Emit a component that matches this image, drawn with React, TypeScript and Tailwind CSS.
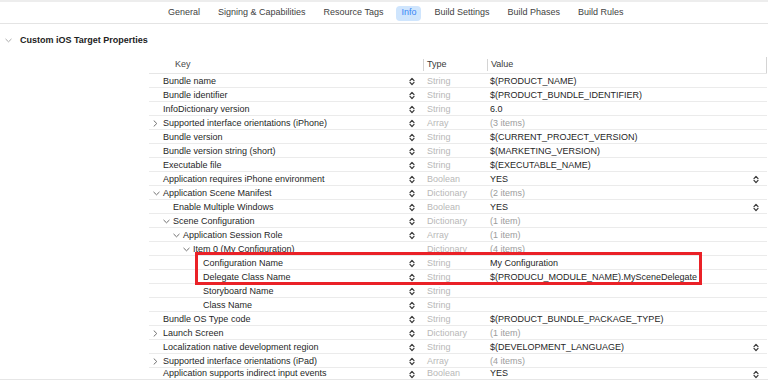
import React from "react";

type Row = {
  k: string;
  l?: number;
  chev?: "right" | "down";
  t: string;
  v: string;
  muted?: boolean;
  rs?: boolean;
  noStep?: boolean;
};

const rows: Row[] = [
  { k: "Bundle name", t: "String", v: "$(PRODUCT_NAME)" },
  { k: "Bundle identifier", t: "String", v: "$(PRODUCT_BUNDLE_IDENTIFIER)" },
  { k: "InfoDictionary version", t: "String", v: "6.0" },
  { k: "Supported interface orientations (iPhone)", chev: "right", t: "Array", v: "(3 items)", muted: true },
  { k: "Bundle version", t: "String", v: "$(CURRENT_PROJECT_VERSION)" },
  { k: "Bundle version string (short)", t: "String", v: "$(MARKETING_VERSION)" },
  { k: "Executable file", t: "String", v: "$(EXECUTABLE_NAME)" },
  { k: "Application requires iPhone environment", t: "Boolean", v: "YES", rs: true },
  { k: "Application Scene Manifest", chev: "down", t: "Dictionary", v: "(2 items)", muted: true },
  { k: "Enable Multiple Windows", l: 1, t: "Boolean", v: "YES", rs: true },
  { k: "Scene Configuration", l: 1, chev: "down", t: "Dictionary", v: "(1 item)", muted: true },
  { k: "Application Session Role", l: 2, chev: "down", t: "Array", v: "(1 item)", muted: true },
  { k: "Item 0 (My Configuration)", l: 3, chev: "down", t: "Dictionary", v: "(4 items)", muted: true, noStep: true },
  { k: "Configuration Name", l: 4, t: "String", v: "My Configuration" },
  { k: "Delegate Class Name", l: 4, t: "String", v: "$(PRODUCU_MODULE_NAME).MySceneDelegate" },
  { k: "Storyboard Name", l: 4, t: "String", v: "" },
  { k: "Class Name", l: 4, t: "String", v: "" },
  { k: "Bundle OS Type code", t: "String", v: "$(PRODUCT_BUNDLE_PACKAGE_TYPE)" },
  { k: "Launch Screen", chev: "right", t: "Dictionary", v: "(1 item)", muted: true },
  { k: "Localization native development region", t: "String", v: "$(DEVELOPMENT_LANGUAGE)", rs: true },
  { k: "Supported interface orientations (iPad)", chev: "right", t: "Array", v: "(4 items)", muted: true },
  { k: "Application supports indirect input events", t: "Boolean", v: "YES", rs: true },
];

const indent = ["pl-[4px]", "pl-[14px]", "pl-[24px]", "pl-[34px]", "pl-[44px]"];

function Stepper() {
  return (
    <svg width="6" height="9" viewBox="0 0 6 9" className="shrink-0">
      <path d="M1 3.6 L3 1.4 L5 3.6" fill="none" stroke="#3e3e3e" strokeWidth="1.3" strokeLinecap="round" strokeLinejoin="round" />
      <path d="M1 5.4 L3 7.6 L5 5.4" fill="none" stroke="#3e3e3e" strokeWidth="1.3" strokeLinecap="round" strokeLinejoin="round" />
    </svg>
  );
}

function Chevron({ dir }: { dir: "right" | "down" }) {
  if (dir === "right") {
    return (
      <svg width="5" height="7" viewBox="0 0 5 7">
        <path d="M1 0.8 L3.8 3.5 L1 6.2" fill="none" stroke="#6e6e6e" strokeWidth="1" strokeLinecap="round" strokeLinejoin="round" />
      </svg>
    );
  }
  return (
    <svg width="7" height="5" viewBox="0 0 7 5">
      <path d="M0.8 1.2 L3.5 3.8 L6.2 1.2" fill="none" stroke="#6e6e6e" strokeWidth="1" strokeLinecap="round" strokeLinejoin="round" />
    </svg>
  );
}

const tabs = ["General", "Signing & Capabilities", "Resource Tags", "Info", "Build Settings", "Build Phases", "Build Rules"];

export default function App() {
  return (
    <div
      className="w-[768px] h-[388px] overflow-hidden bg-white text-[9px] text-[#1f1f1f]"
      style={{ fontFamily: '"Liberation Sans", Arial, sans-serif' }}
    >
      <div className="h-[2px] bg-[#ededed]" />
      <div className="h-[22px] border-b border-[#e4e4e4] flex items-center pl-[163px] pt-[1px] gap-[8px]">
        {tabs.map((t) =>
          t === "Info" ? (
            <div key={t} className="h-[15px] px-[5px] rounded-[4px] bg-[#cfe5fd] text-[#3a85f5] flex items-center">
              {t}
            </div>
          ) : (
            <div key={t} className="px-[5px] text-[#3f3f3f]">
              {t}
            </div>
          )
        )}
      </div>
      <div className="h-[31px] flex items-center pt-[2px]">
        <svg width="7" height="5" viewBox="0 0 7 5" className="ml-[5px]">
          <path d="M0.8 1.2 L3.5 3.8 L6.2 1.2" fill="none" stroke="#a8a8a8" strokeWidth="1" strokeLinecap="round" strokeLinejoin="round" />
        </svg>
        <div className="ml-[8px] font-bold text-[#222]">Custom iOS Target Properties</div>
      </div>
      <div className="border-b border-[#e6e6e6]">
        <div className="relative ml-[149px] w-[618px]">
          <div className="h-[19px] flex items-center border-b border-[#e6e6e6] pt-[2px]">
            <div className="w-[274px] pl-[26px] text-[#4a4a4a]">Key</div>
            <div className="w-[1px] h-[12px] bg-[#d4d4d4]" />
            <div className="w-[63px] pl-[3px] text-[#3a3a3a]">Type</div>
            <div className="w-[1px] h-[12px] bg-[#d4d4d4]" />
            <div className="flex-1 pl-[3px] text-[#3a3a3a]">Value</div>
            <div className="w-[1px] h-[16px] bg-[#d4d4d4]" />
          </div>
          {rows.map((r, i) => {
            const last = i === rows.length - 1;
            return (
              <div
                key={i}
                className={
                  last
                    ? "h-[11px] flex items-center pt-[1px]"
                    : "h-[14px] flex items-center border-b border-[#ebebeb] pt-[2px]"
                }
              >
                <div className={"w-[274px] flex items-center pr-[8px] " + indent[r.l ?? 0]}>
                  <div className="w-[10px] flex items-center">{r.chev ? <Chevron dir={r.chev} /> : null}</div>
                  <div className="flex-1 whitespace-nowrap">{r.k}</div>
                  {r.noStep ? <div className="w-[6px]" /> : <Stepper />}
                </div>
                <div className="w-[64px] pl-[4px] text-[#b8b8b8]">{r.t}</div>
                <div className="flex-1 flex items-center pl-[3px] pr-[8px]">
                  <div className={"flex-1 whitespace-nowrap " + (r.muted ? "text-[#9c9c9c]" : "text-[#1f1f1f]")}>{r.v}</div>
                  {r.rs ? <Stepper /> : null}
                </div>
              </div>
            );
          })}
          <div className="absolute left-[46px] top-[197px] w-[507px] h-[33px] border-[3px] border-[#ea2127] pointer-events-none" />
        </div>
      </div>
    </div>
  );
}
